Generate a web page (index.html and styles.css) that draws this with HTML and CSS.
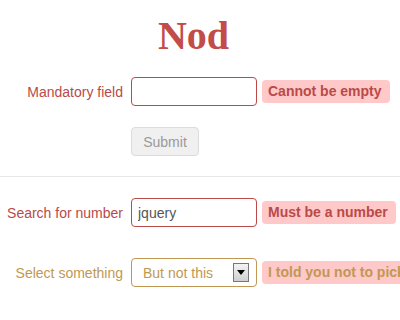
FILE: index.html
```html
<!DOCTYPE html>
<html>
<head>
<meta charset="utf-8">
<link rel="stylesheet" href="styles.css">
</head>
<body>
<h1 class="title">Nod</h1>
<form class="form">
  <div class="row error first">
    <label class="label">Mandatory field</label>
    <input class="field" type="text" value="">
    <span class="help">Cannot be empty</span>
  </div>
  <div class="row actions">
    <span class="label"></span>
    <button class="btn" type="button">Submit</button>
  </div>
  <hr class="divider">
  <div class="row error">
    <label class="label">Search for number</label>
    <input class="field" type="text" value="jquery">
    <span class="help">Must be a number</span>
  </div>
  <div class="row warning last">
    <label class="label">Select something</label>
    <div class="select">
      <span class="select-text">But not this</span>
      <span class="arrow"><svg width="8" height="5" viewBox="0 0 8 5"><path d="M0 0H8L4 5Z" fill="#000"/></svg></span>
    </div>
    <span class="help">I told you not to pick this one</span>
  </div>
</form>
</body>
</html>
```
FILE: styles.css
```css
html, body {
  margin: 0;
  padding: 0;
  background: #fff;
  overflow: hidden;
}
body {
  font-family: "Liberation Sans", Arial, sans-serif;
  font-size: 14px;
  width: 400px;
  height: 320px;
}
.title {
  margin: 14px 0 0 0;
  padding-right: 13px;
  height: 44px;
  font-family: "Liberation Serif", "Times New Roman", serif;
  font-weight: bold;
  font-size: 40px;
  line-height: 44px;
  text-align: center;
  color: #c24c49;
}
.form {
  margin: 0;
}
.row {
  display: flex;
  align-items: center;
  height: 29px;
  white-space: nowrap;
}
.row.first {
  margin-top: 19px;
}
.row.actions {
  margin-top: 21px;
}
.row.last {
  margin-top: 31px;
}
.label {
  width: 123px;
  flex: none;
  text-align: right;
  margin-right: 8px;
}
.field, .select {
  box-sizing: border-box;
  width: 126px;
  height: 29px;
  flex: none;
  border: 1px solid #b94a48;
  border-radius: 4px;
  padding: 0 6px;
  font-family: "Liberation Sans", Arial, sans-serif;
  font-size: 14px;
  color: #555;
  background: #fff;
  outline: none;
  margin: 0;
}
.help {
  margin-left: 5px;
  height: 23px;
  line-height: 23px;
  padding: 0 8px 0 6px;
  border-radius: 4px;
  background: #ffc9c9;
  font-weight: bold;
  flex: none;
}
.error .label, .error .help {
  color: #b94a48;
}
.warning .label, .warning .help {
  color: #c09853;
}
.warning .select {
  border-color: #c09853;
  display: flex;
  align-items: center;
  justify-content: space-between;
  padding: 0 7px 0 11px;
}
.select-text {
  color: #c09853;
}
.arrow {
  box-sizing: border-box;
  width: 16px;
  height: 19px;
  border: 1px solid #777;
  background: linear-gradient(#f4f4f4, #cfcfcf);
  display: flex;
  align-items: center;
  justify-content: center;
}
.btn {
  box-sizing: border-box;
  width: 68px;
  height: 29px;
  flex: none;
  margin: 0;
  padding: 0;
  border: 1px solid #dcdcdc;
  border-radius: 4px;
  background: #f0f0f0;
  color: #999;
  font-family: "Liberation Sans", Arial, sans-serif;
  font-size: 14px;
}
.divider {
  margin: 20px 0 21px 0;
  border: 0;
  border-top: 1px solid #e8e8e8;
  height: 0;
}
```
